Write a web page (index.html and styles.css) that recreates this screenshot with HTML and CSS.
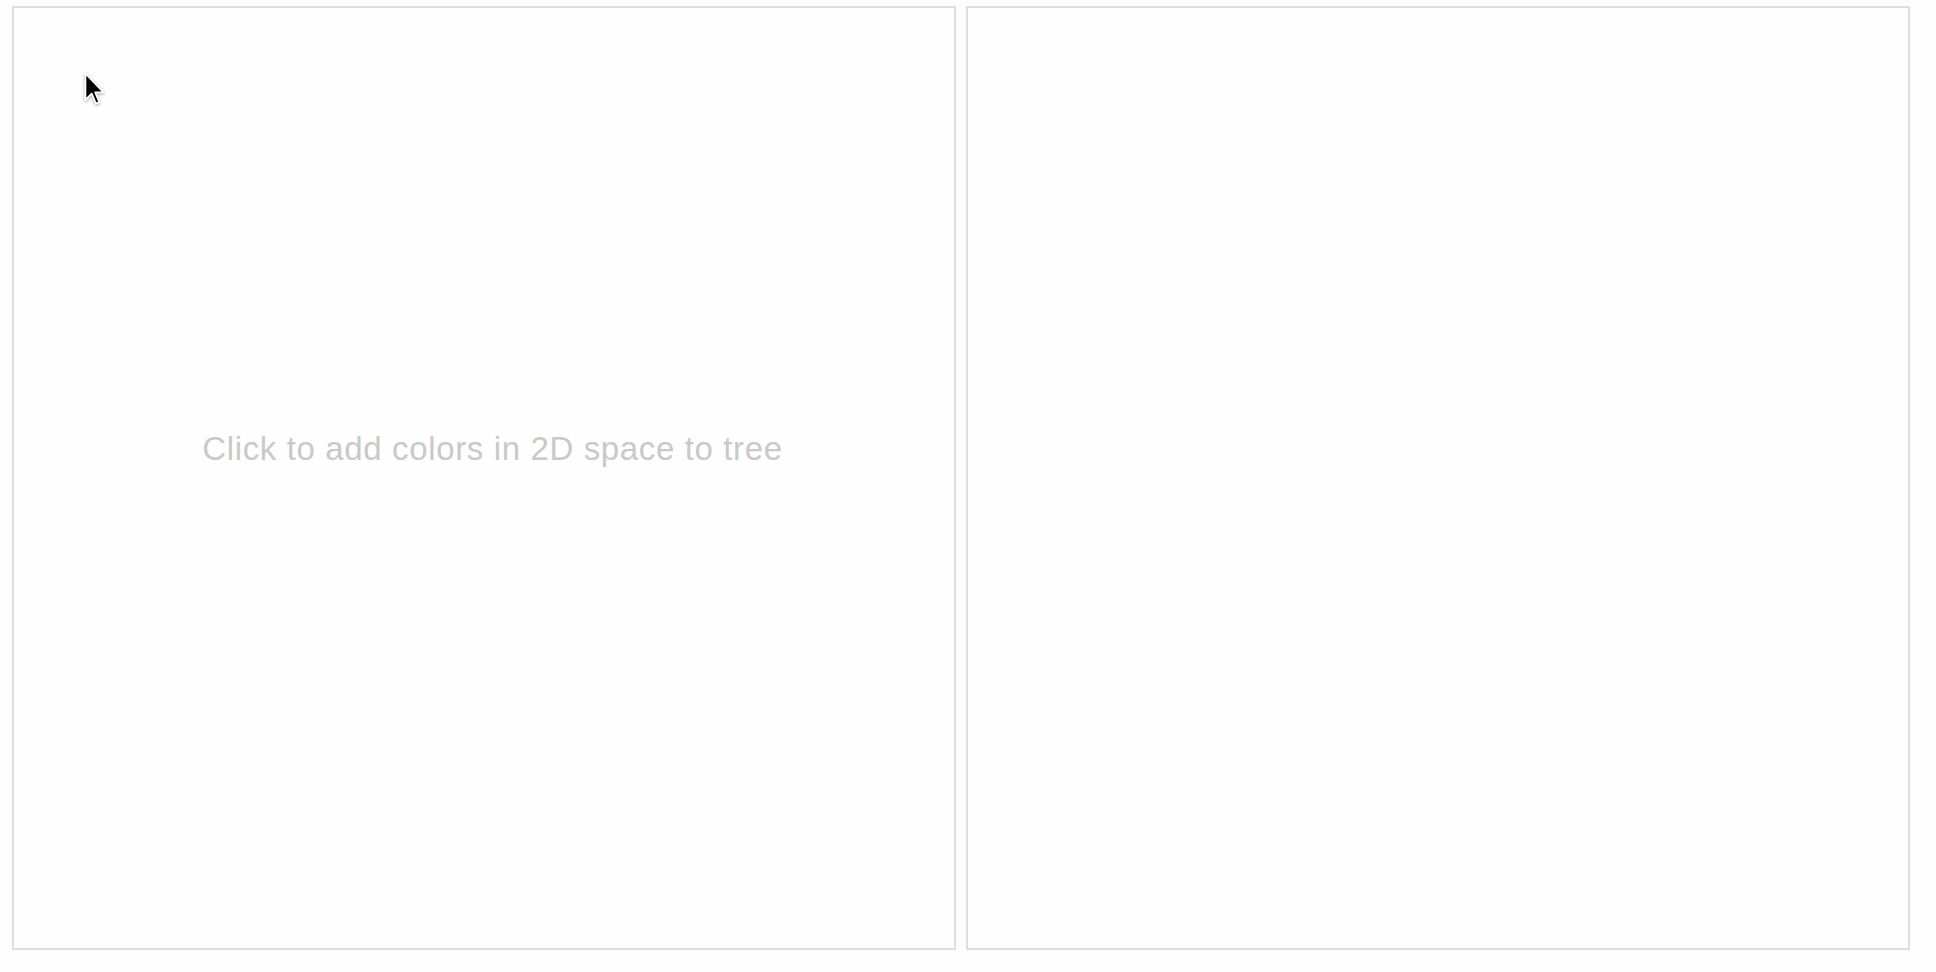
FILE: index.html
```html
<!DOCTYPE html>
<html lang="en">
<head>
    <meta charset="UTF-8">
    <meta name="viewport" content="width=device-width, initial-scale=1.0">
    <title>Color Tree</title>
    <link rel="stylesheet" href="styles.css">
</head>
<body>
    <div class="panels">
        <div class="panel space-panel">
            <span class="hint">Click to add colors in 2D space to tree</span>
            <svg class="cursor" width="28" height="42" viewBox="0 0 20 30">
                <path d="M1 1 L1 20 L5.5 15.5 L8.5 22.5 L11 21.5 L8 14.5 L14 14.5 Z" fill="#000" stroke="#fff" stroke-width="1.3" stroke-linejoin="round"/>
            </svg>
        </div>
        <div class="panel tree-panel"></div>
    </div>
</body>
</html>
```

FILE: styles.css
```css
body {
    font-family: "Liberation Sans", Arial, sans-serif;
    background-color: #fdfdfd;
    margin: 0;
}

.panels {
    display: flex;
    gap: 10px;
    padding: 6px 12px;
}

.panel {
    width: 940px;
    height: 940px;
    border: 2px solid #dedede;
    background-color: #fefefe;
    position: relative;
}

.space-panel {
    display: flex;
    justify-content: center;
    align-items: center;
    box-sizing: content-box;
    width: 923px;
    height: 881px;
    padding: 0 0 59px 17px;
}

.hint {
    color: #c9c9c9;
    font-size: 33px;
    line-height: 36px;
    letter-spacing: 0.63px;
    white-space: nowrap;
}

.cursor {
    position: absolute;
    left: 70px;
    top: 64px;
    filter: drop-shadow(0 1px 1.5px rgba(0, 0, 0, 0.35));
}
```
